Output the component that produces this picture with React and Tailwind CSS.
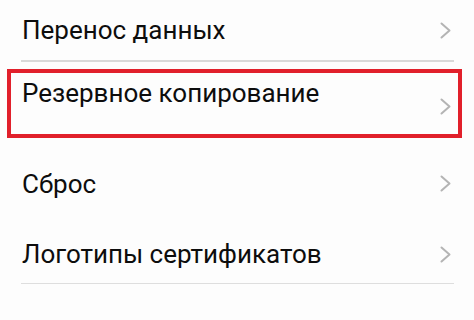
import React from "react";

function Chevron() {
  return (
    <svg width="11" height="17" viewBox="0 0 11 17" fill="none" className="shrink-0">
      <polyline points="1.5,1.5 9.5,8.5 1.5,15.5" stroke="#b4b4b4" strokeWidth="2" strokeLinecap="round" strokeLinejoin="round" />
    </svg>
  );
}

export default function App() {
  return (
    <div
      className="w-[474px] h-[320px] bg-[#fdfdfd] overflow-hidden text-[#0d0d0d]"
      style={{ fontFamily: "Roboto, 'Noto Sans', sans-serif" }}
    >
      <div className="h-[60px] flex items-center justify-between pl-[22px] pr-[23px]">
        <span className="text-[26px] leading-[30px]">Перенос данных</span>
        <Chevron />
      </div>
      <div className="ml-[21px] mr-[20px] h-[1.5px] bg-[#d9d9d9]" />

      <div className="mt-[7px] ml-[7px] mr-[12px] h-[69px] border-4 border-[#e1202b] flex items-start justify-between pl-[11px] pr-[7px]">
        <span className="pt-[5px] text-[26px] leading-[30px]">Резервное копирование</span>
        <div className="self-center mt-[6px]">
          <Chevron />
        </div>
      </div>

      <div className="mt-[11px] h-[70px] flex items-center justify-between pl-[22px] pr-[23px]">
        <span className="text-[26px] leading-[30px]">Сброс</span>
        <Chevron />
      </div>
      <div className="h-[64px] flex items-start justify-between pl-[22px] pr-[23px] pt-[20px]">
        <span className="text-[26px] leading-[30px]">Логотипы сертификатов</span>
        <div className="mt-[7px]">
          <Chevron />
        </div>
      </div>
      <div className="ml-[21px] mr-[20px] h-[1.5px] bg-[#dedede]" />
    </div>
  );
}
